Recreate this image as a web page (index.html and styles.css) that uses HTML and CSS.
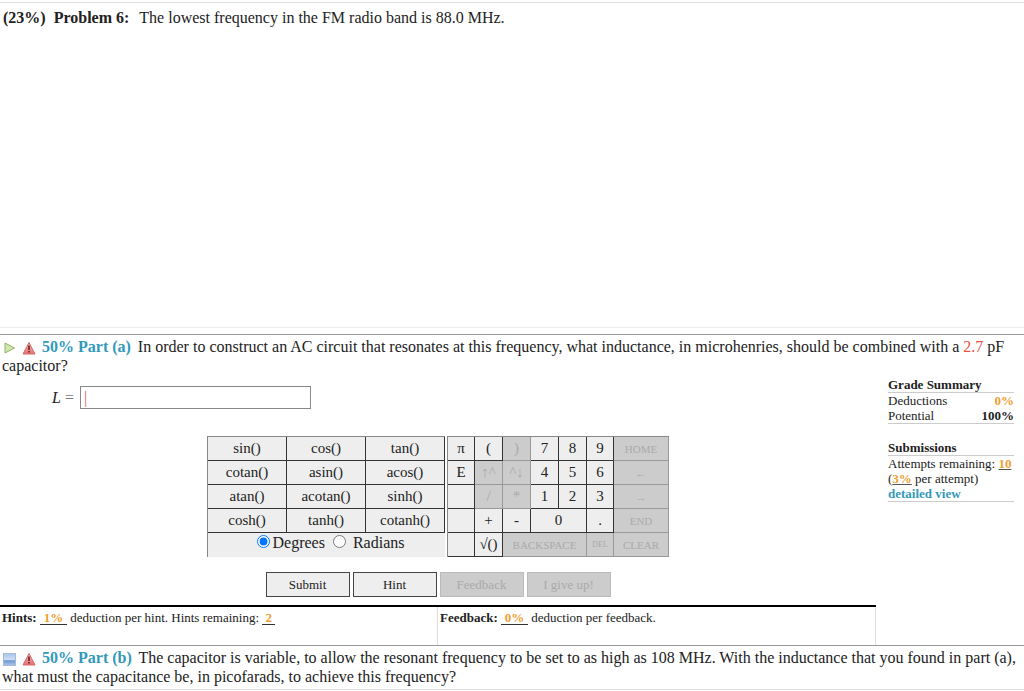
FILE: index.html
```html
<!DOCTYPE html>
<html lang="en">
<head>
    <meta charset="UTF-8">
    <meta name="viewport" content="width=device-width, initial-scale=1.0">
    <title>Problem 6</title>
    <link rel="stylesheet" href="styles.css">
</head>
<body>
    <svg class="defs" aria-hidden="true">
        <defs>
            <linearGradient id="red" x1="0" y1="0" x2="0" y2="1">
                <stop offset="0" stop-color="#f4b8b6"/>
                <stop offset="1" stop-color="#e27272"/>
            </linearGradient>
            <linearGradient id="blue" x1="0" y1="0" x2="0" y2="1">
                <stop offset="0" stop-color="#a9c6ea"/>
                <stop offset="0.5" stop-color="#c9def5"/>
                <stop offset="0.6" stop-color="#6f9bd1"/>
                <stop offset="1" stop-color="#a9c6ea"/>
            </linearGradient>
            <symbol id="warning" viewBox="0 0 14 14">
                <path d="M7 1.5 L13 13 H1 Z" fill="url(#red)" stroke="#d9686a" stroke-linejoin="round"/>
                <path d="M7 4.5 V9 M7 10 V11.5" stroke="#6a1f22" stroke-width="1.6"/>
            </symbol>
        </defs>
    </svg>

    <section class="problem">
        <p><b>(23%)</b><b class="title">Problem 6:</b>The lowest frequency in the FM radio band is 88.0 MHz.</p>
    </section>

    <section class="part part-a">
        <p class="question">
            <svg class="icon" viewBox="0 0 14 14"><path d="M3 2 L12.5 7 L3 12 Z" fill="#d3e6ae" stroke="#8fb566" stroke-linejoin="round"/></svg>
            <svg class="icon"><use href="#warning"/></svg>
            <b class="part-name">50% Part (a)</b>
            In order to construct an AC circuit that resonates at this frequency, what inductance, in microhenries, should be combined with a <span class="value">2.7</span> pF capacitor?
        </p>

        <div class="columns">
            <div class="work">
                <div class="answer">
                    <label for="answer"><i>L</i> <span class="equals">=</span></label>
                    <input type="text" id="answer" name="answer" placeholder="|">
                </div>

                <div class="calculator">
                    <div class="functions">
                        <button type="button">sin()</button>
                        <button type="button">cos()</button>
                        <button type="button">tan()</button>
                        <button type="button">cotan()</button>
                        <button type="button">asin()</button>
                        <button type="button">acos()</button>
                        <button type="button">atan()</button>
                        <button type="button">acotan()</button>
                        <button type="button">sinh()</button>
                        <button type="button">cosh()</button>
                        <button type="button">tanh()</button>
                        <button type="button">cotanh()</button>
                        <div class="angle">
                            <input type="radio" name="angle" id="degrees" checked><label for="degrees">Degrees</label>
                            <input type="radio" name="angle" id="radians"><label for="radians" class="radians">Radians</label>
                        </div>
                    </div>
                    <div class="keypad">
                        <button type="button">π</button>
                        <button type="button">(</button>
                        <button type="button" disabled>)</button>
                        <button type="button">7</button>
                        <button type="button">8</button>
                        <button type="button">9</button>
                        <button type="button" class="small" disabled>HOME</button>

                        <button type="button">E</button>
                        <button type="button" disabled>↑^</button>
                        <button type="button" disabled>^↓</button>
                        <button type="button">4</button>
                        <button type="button">5</button>
                        <button type="button">6</button>
                        <button type="button" class="small" disabled>←</button>

                        <button type="button" aria-label="Blank"></button>
                        <button type="button" disabled>/</button>
                        <button type="button" disabled>*</button>
                        <button type="button">1</button>
                        <button type="button">2</button>
                        <button type="button">3</button>
                        <button type="button" class="small" disabled>→</button>

                        <button type="button" aria-label="Blank"></button>
                        <button type="button">+</button>
                        <button type="button">-</button>
                        <button type="button" class="zero">0</button>
                        <button type="button">.</button>
                        <button type="button" class="small" disabled>END</button>

                        <button type="button" aria-label="Blank"></button>
                        <button type="button">√()</button>
                        <button type="button" class="small backspace" disabled>BACKSPACE</button>
                        <button type="button" class="tiny" disabled>DEL</button>
                        <button type="button" class="small" disabled>CLEAR</button>
                    </div>
                </div>

                <div class="actions">
                    <button type="button">Submit</button>
                    <button type="button">Hint</button>
                    <button type="button" disabled>Feedback</button>
                    <button type="button" disabled>I give up!</button>
                </div>

                <div class="help">
                    <div><b>Hints:</b> <b class="amount">1%</b> deduction per hint. Hints remaining: <b class="amount narrow">2</b></div>
                    <div><b>Feedback:</b> <b class="amount">0%</b> deduction per feedback.</div>
                </div>
            </div>

            <aside class="summary">
                <h2>Grade Summary</h2>
                <dl>
                    <dt>Deductions</dt>
                    <dd class="orange">0%</dd>
                    <dt>Potential</dt>
                    <dd>100%</dd>
                </dl>
                <h2>Submissions</h2>
                <div class="attempts">
                    Attempts remaining: <b class="under">10</b><br>
                    (<b class="under">3%</b> per attempt)<br>
                    <a href="#">detailed view</a>
                </div>
            </aside>
        </div>
    </section>

    <section class="part part-b">
        <p class="question">
            <svg class="icon" viewBox="0 0 14 14"><rect x="1.5" y="1.5" width="12" height="12" fill="url(#blue)" stroke="#a9b9d3"/></svg>
            <svg class="icon"><use href="#warning"/></svg>
            <b class="part-name">50% Part (b)</b>
            The capacitor is variable, to allow the resonant frequency to be set to as high as 108 MHz. With the inductance that you found in part (a), what must the capacitance be, in picofarads, to achieve this frequency?
        </p>
    </section>
</body>
</html>
```
FILE: styles.css
```css
body {
    margin: 0;
    padding-top: 2px;
    background: white;
    color: #222;
    font-family: "Liberation Serif", "Times New Roman", serif;
    font-size: 16px;
    line-height: 19px;
}
p {
    margin: 0;
}
button {
    margin: 0;
    padding: 0;
    font-family: inherit;
    font-size: 15px;
    color: #222;
    background: #eee;
}
button:disabled {
    color: #aaa;
    background: #ccc;
}
.defs {
    position: absolute;
    width: 0;
    height: 0;
}
.problem {
    min-height: 319px;
    padding: 5px 3px 0;
    border-top: 1px solid #e2e2e2;
    border-bottom: 1px solid #eee;
}
.problem .title {
    margin: 0 10px 0 8px;
}
.part {
    border-top: 1px solid #999;
}
.part-a {
    margin-top: 6px;
}
.part-b {
    padding-bottom: 3px;
    border-bottom: 1px solid #ddd;
}
.question {
    padding: 2px 2px 0;
}
.icon {
    width: 14px;
    height: 14px;
    margin-right: 2px;
    vertical-align: -3px;
}
.part-name {
    margin-right: 3px;
    color: #3399bb;
}
.value {
    color: #e8543f;
}
.columns {
    display: flex;
    justify-content: space-between;
}
.work {
    flex: 0 1 876px;
}
.answer {
    display: flex;
    align-items: center;
    gap: 6px;
    padding: 11px 0 0 52px;
}
.equals {
    color: #777;
}
.answer input {
    width: 231px;
    height: 23px;
    padding: 0 3px;
    box-sizing: border-box;
    border: 1px solid #888;
    font-family: inherit;
    font-size: 16px;
}
.answer input::placeholder {
    color: #d66;
}
.calculator {
    display: flex;
    justify-content: center;
    gap: 2px;
    margin-top: 27px;
}
.functions,
.keypad {
    display: grid;
    grid-auto-rows: 24px;
    border-top: 1px solid #888;
    border-left: 1px solid #888;
}
.functions {
    grid-template-columns: repeat(3, 79px);
}
.keypad {
    grid-template-columns: 27px repeat(4, 28px) 27px 55px;
}
.functions button,
.keypad button {
    border: solid #333;
    border-width: 0 1px 1px 0;
}
.keypad button:disabled {
    border-color: #999;
}
.angle {
    grid-column: span 3;
    display: flex;
    align-items: flex-start;
    justify-content: center;
    background: #eee;
}
.angle input {
    width: 13px;
    height: 13px;
    margin: 2px 3px 0 8px;
}
.angle .radians {
    margin-left: 4px;
}
.keypad .zero {
    grid-column: span 2;
}
.keypad .backspace {
    grid-column: span 3;
}
.keypad .small {
    font-size: 11px;
}
.keypad .tiny {
    font-size: 8px;
}
.actions {
    display: flex;
    justify-content: center;
    gap: 3px;
    margin-top: 15px;
}
.actions button {
    width: 84px;
    height: 25px;
    border: 1px solid #444;
    font-size: 13px;
}
.actions button:disabled {
    border-color: #bbb;
}
.help {
    display: grid;
    grid-template-columns: 1fr 1fr;
    min-height: 38px;
    margin-top: 8px;
    border-top: 2px solid black;
    font-size: 13px;
}
.help div {
    padding: 1px 2px;
    border-right: 1px solid #ddd;
}
.amount {
    display: inline-block;
    box-sizing: border-box;
    width: 27px;
    height: 17px;
    border-bottom: 1px solid #333;
    color: #f0a030;
    text-align: center;
}
.amount.narrow {
    width: 13px;
}
.summary {
    width: 126px;
    margin: 2px 10px 0 0;
    font-size: 13px;
    line-height: 15px;
}
.summary h2 {
    margin: 0;
    border-bottom: 1px solid #ccc;
    font-size: 13px;
}
.summary dl {
    display: grid;
    grid-template-columns: 1fr auto;
    margin: 0 0 16px;
    border-bottom: 1px solid #ccc;
}
.summary dd {
    margin: 0;
    font-weight: bold;
    text-align: right;
}
.summary .orange,
.under {
    color: #f0a030;
}
.under {
    text-decoration: underline #555;
}
.attempts {
    border-bottom: 1px solid #ccc;
    white-space: nowrap;
}
.attempts a {
    color: #3399bb;
    font-weight: bold;
    text-decoration: none;
}
```
